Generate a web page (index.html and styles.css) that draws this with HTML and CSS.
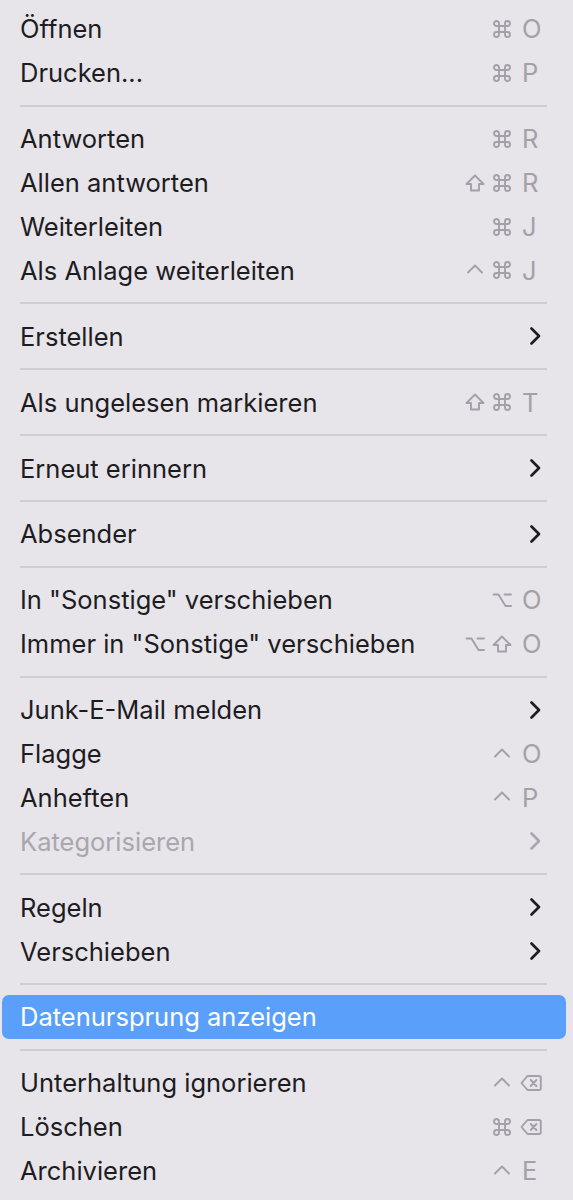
FILE: index.html
```html
<!DOCTYPE html>
<html lang="de">
  <head>
    <meta charset="UTF-8" />
    <meta name="viewport" content="width=device-width, initial-scale=1.0" />
    <title>Kontextmenü</title>
    <link rel="stylesheet" href="styles.css">
  </head>
  <body>
    <!-- symbol defs for the shortcut glyphs -->
    <svg class="defs" aria-hidden="true">
      <symbol id="cmd" viewBox="0 0 20 20"><path d="M7 7V4.5A2.5 2.5 0 1 0 4.5 7H15.5A2.5 2.5 0 1 0 13 4.5V15.5A2.5 2.5 0 1 0 15.5 13H4.5A2.5 2.5 0 1 0 7 15.5Z"/></symbol>
      <symbol id="shift" viewBox="0 0 20 20"><path d="M10 2.5L18.5 11H14V17.5H6V11H1.5Z"/></symbol>
      <symbol id="ctrl" viewBox="0 0 20 20"><path d="M3 12.5L10 5.5L17 12.5"/></symbol>
      <symbol id="opt" viewBox="0 0 20 20"><path d="M1.5 4.5H6.5L13.5 16H19M12.5 4.5H19"/></symbol>
      <symbol id="del" viewBox="0 0 22 20"><path d="M7.5 3H19a1.8 1.8 0 0 1 1.8 1.8v10.4A1.8 1.8 0 0 1 19 17H7.5L1.5 10Z"/><path d="M10.8 7l5.6 6M16.4 7l-5.6 6"/></symbol>
      <symbol id="chev" viewBox="0 0 12 20"><path d="M2.5 2.5l7.5 7.5-7.5 7.5"/></symbol>
    </svg>

    <ul class="menu">
      <li class="item"><span class="label">Öffnen</span><span class="keys"><span class="mods"><svg class="ic"><use href="#cmd"/></svg></span><span class="key">O</span></span></li>
      <li class="item"><span class="label">Drucken...</span><span class="keys"><span class="mods"><svg class="ic"><use href="#cmd"/></svg></span><span class="key">P</span></span></li>
      <li class="sep"></li>

      <li class="item"><span class="label">Antworten</span><span class="keys"><span class="mods"><svg class="ic"><use href="#cmd"/></svg></span><span class="key">R</span></span></li>
      <li class="item"><span class="label">Allen antworten</span><span class="keys"><span class="mods"><svg class="ic"><use href="#shift"/></svg><svg class="ic"><use href="#cmd"/></svg></span><span class="key">R</span></span></li>
      <li class="item"><span class="label">Weiterleiten</span><span class="keys"><span class="mods"><svg class="ic"><use href="#cmd"/></svg></span><span class="key">J</span></span></li>
      <li class="item"><span class="label">Als Anlage weiterleiten</span><span class="keys"><span class="mods"><svg class="ic"><use href="#ctrl"/></svg><svg class="ic"><use href="#cmd"/></svg></span><span class="key">J</span></span></li>
      <li class="sep"></li>

      <li class="item"><span class="label">Erstellen</span><svg class="chevron"><use href="#chev"/></svg></li>
      <li class="sep"></li>

      <li class="item"><span class="label">Als ungelesen markieren</span><span class="keys"><span class="mods"><svg class="ic"><use href="#shift"/></svg><svg class="ic"><use href="#cmd"/></svg></span><span class="key">T</span></span></li>
      <li class="sep"></li>

      <li class="item"><span class="label">Erneut erinnern</span><svg class="chevron"><use href="#chev"/></svg></li>
      <li class="sep"></li>

      <li class="item"><span class="label">Absender</span><svg class="chevron"><use href="#chev"/></svg></li>
      <li class="sep"></li>

      <li class="item"><span class="label">In "Sonstige" verschieben</span><span class="keys"><span class="mods"><svg class="ic"><use href="#opt"/></svg></span><span class="key">O</span></span></li>
      <li class="item"><span class="label">Immer in "Sonstige" verschieben</span><span class="keys"><span class="mods"><svg class="ic"><use href="#opt"/></svg><svg class="ic"><use href="#shift"/></svg></span><span class="key">O</span></span></li>
      <li class="sep"></li>

      <li class="item"><span class="label">Junk-E-Mail melden</span><svg class="chevron"><use href="#chev"/></svg></li>
      <li class="item"><span class="label">Flagge</span><span class="keys"><span class="mods"><svg class="ic"><use href="#ctrl"/></svg></span><span class="key">O</span></span></li>
      <li class="item"><span class="label">Anheften</span><span class="keys"><span class="mods"><svg class="ic"><use href="#ctrl"/></svg></span><span class="key">P</span></span></li>
      <li class="item disabled"><span class="label">Kategorisieren</span><svg class="chevron"><use href="#chev"/></svg></li>
      <li class="sep"></li>

      <li class="item"><span class="label">Regeln</span><svg class="chevron"><use href="#chev"/></svg></li>
      <li class="item"><span class="label">Verschieben</span><svg class="chevron"><use href="#chev"/></svg></li>
      <li class="sep"></li>

      <li class="item active"><span class="label">Datenursprung anzeigen</span></li>
      <li class="sep"></li>

      <li class="item"><span class="label">Unterhaltung ignorieren</span><span class="keys"><span class="mods"><svg class="ic"><use href="#ctrl"/></svg></span><span class="key"><svg class="ic del"><use href="#del"/></svg></span></span></li>
      <li class="item"><span class="label">Löschen</span><span class="keys"><span class="mods"><svg class="ic"><use href="#cmd"/></svg></span><span class="key"><svg class="ic del"><use href="#del"/></svg></span></span></li>
      <li class="item"><span class="label">Archivieren</span><span class="keys"><span class="mods"><svg class="ic"><use href="#ctrl"/></svg></span><span class="key">E</span></span></li>
    </ul>
  </body>
</html>
```

FILE: styles.css
```css
body {
  margin: 0;
  padding: 0;
  background-color: #e7e4ea;
  font-family: Inter, "Liberation Sans", sans-serif;
}
.defs {
  display: none;
}
.menu {
  list-style: none;
  margin: 0;
  padding: 7px 0 0;
}
.item {
  display: flex;
  align-items: center;
  justify-content: space-between;
  height: 43.9px;
  margin: 0 7px 0 2px;
  padding: 0 23px 0 18px;
  border-radius: 7px;
  font-size: 25.5px;
  color: #1d1d1f;
}
.item.disabled {
  color: #a9a7ad;
}
.item.active {
  background-color: #5aa0fa;
  color: white;
}
.sep {
  height: 2px;
  margin: 10px 26px 10px 20px;
  background-color: #cfccd3;
}
.keys {
  display: flex;
  align-items: center;
  color: #a3a1a7;
}
.mods {
  display: flex;
  gap: 7px;
}
.ic {
  width: 20px;
  height: 20px;
  fill: none;
  stroke: #a3a1a7;
  stroke-width: 1.9;
  stroke-linejoin: round;
  stroke-linecap: round;
}
.key {
  width: 21px;
  margin-left: 10px;
  display: flex;
  align-items: center;
}
.del {
  width: 22px;
  margin-left: -2px;
}
.chevron {
  width: 12px;
  height: 20px;
  margin-right: 2px;
  fill: none;
  stroke: #1d1d1f;
  stroke-width: 2.7;
  stroke-linecap: round;
  stroke-linejoin: round;
}
.disabled .chevron {
  stroke: #a9a7ad;
}
```
